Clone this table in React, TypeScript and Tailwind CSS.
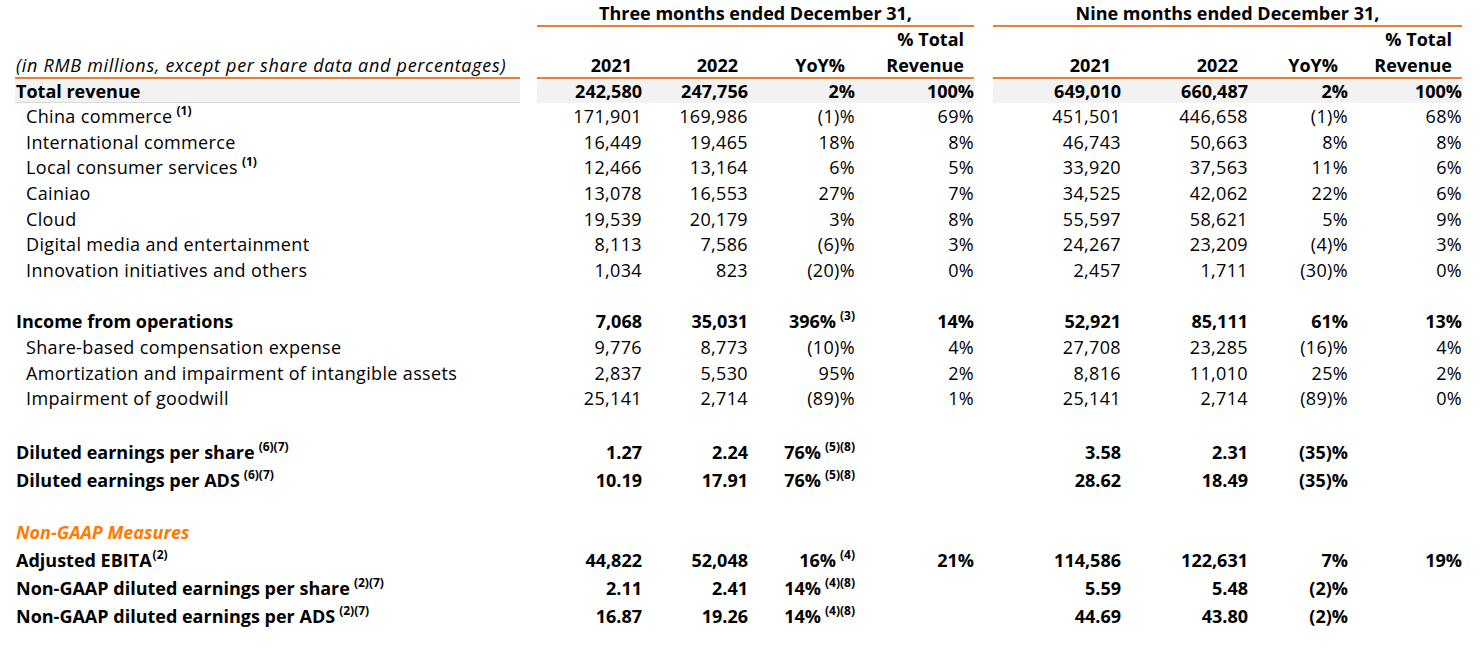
import React from 'react'

type Row = {
  label: string
  note?: string
  bold?: boolean
  indent?: boolean
  grey?: boolean
  h: string
  q?: [string, string, string, string]
  qNote?: string
  n?: [string, string, string, string]
  nNote?: string
  orange?: boolean
}

const grid =
  'grid grid-cols-[505px_17px_105px_106px_107px_119px_19px_128px_127px_100px_114px]'

const rows: Row[] = [
  { label: 'Total revenue', bold: true, grey: true, h: 'h-[24px]', q: ['242,580', '247,756', '2%', '100%'], n: ['649,010', '660,487', '2%', '100%'] },
  { label: 'China commerce', note: '(1)', indent: true, h: 'h-[25.7px]', q: ['171,901', '169,986', '(1)%', '69%'], n: ['451,501', '446,658', '(1)%', '68%'] },
  { label: 'International commerce', indent: true, h: 'h-[25.7px]', q: ['16,449', '19,465', '18%', '8%'], n: ['46,743', '50,663', '8%', '8%'] },
  { label: 'Local consumer services', note: '(1)', indent: true, h: 'h-[25.7px]', q: ['12,466', '13,164', '6%', '5%'], n: ['33,920', '37,563', '11%', '6%'] },
  { label: 'Cainiao', indent: true, h: 'h-[25.7px]', q: ['13,078', '16,553', '27%', '7%'], n: ['34,525', '42,062', '22%', '6%'] },
  { label: 'Cloud', indent: true, h: 'h-[25.7px]', q: ['19,539', '20,179', '3%', '8%'], n: ['55,597', '58,621', '5%', '9%'] },
  { label: 'Digital media and entertainment', indent: true, h: 'h-[25.7px]', q: ['8,113', '7,586', '(6)%', '3%'], n: ['24,267', '23,209', '(4)%', '3%'] },
  { label: 'Innovation initiatives and others', indent: true, h: 'h-[25.7px]', q: ['1,034', '823', '(20)%', '0%'], n: ['2,457', '1,711', '(30)%', '0%'] },
  { label: '', h: 'h-[25.7px]' },
  { label: 'Income from operations', bold: true, h: 'h-[25.7px]', q: ['7,068', '35,031', '396%', '14%'], qNote: '(3)', n: ['52,921', '85,111', '61%', '13%'] },
  { label: 'Share-based compensation expense', indent: true, h: 'h-[25.7px]', q: ['9,776', '8,773', '(10)%', '4%'], n: ['27,708', '23,285', '(16)%', '4%'] },
  { label: 'Amortization and impairment of intangible assets', indent: true, h: 'h-[25.7px]', q: ['2,837', '5,530', '95%', '2%'], n: ['8,816', '11,010', '25%', '2%'] },
  { label: 'Impairment of goodwill', indent: true, h: 'h-[25.7px]', q: ['25,141', '2,714', '(89)%', '1%'], n: ['25,141', '2,714', '(89)%', '0%'] },
  { label: '', h: 'h-[26.6px]' },
  { label: 'Diluted earnings per share', note: '(6)(7)', bold: true, h: 'h-[28px]', q: ['1.27', '2.24', '76%', ''], qNote: '(5)(8)', n: ['3.58', '2.31', '(35)%', ''] },
  { label: 'Diluted earnings per ADS', note: '(6)(7)', bold: true, h: 'h-[28px]', q: ['10.19', '17.91', '76%', ''], qNote: '(5)(8)', n: ['28.62', '18.49', '(35)%', ''] },
  { label: '', h: 'h-[24px]' },
  { label: 'Non-GAAP Measures', orange: true, h: 'h-[28px]' },
  { label: 'Adjusted EBITA', note: '(2)', bold: true, h: 'h-[28px]', q: ['44,822', '52,048', '16%', '21%'], qNote: '(4)', n: ['114,586', '122,631', '7%', '19%'] },
  { label: 'Non-GAAP diluted earnings per share', note: '(2)(7)', bold: true, h: 'h-[28px]', q: ['2.11', '2.41', '14%', ''], qNote: '(4)(8)', n: ['5.59', '5.48', '(2)%', ''] },
  { label: 'Non-GAAP diluted earnings per ADS', note: '(2)(7)', bold: true, h: 'h-[28px]', q: ['16.87', '19.26', '14%', ''], qNote: '(4)(8)', n: ['44.69', '43.80', '(2)%', ''] },
]

function Note({ children, tight }: { children: string; tight?: boolean }) {
  return (
    <span
      className={`relative -top-[5px] text-[12px] font-bold tracking-normal ${
        tight ? 'ml-px' : 'ml-[4px]'
      }`}
    >
      {children}
    </span>
  )
}

function Cell({ v, note, grey }: { v?: string; note?: string; grey?: boolean }) {
  return (
    <div className={`flex items-center justify-end ${grey ? 'bg-[#f2f2f2]' : ''}`}>
      {v}
      {v && note && <Note>{note}</Note>}
    </div>
  )
}

function DataRow({ r }: { r: Row }) {
  const g = r.grey
  return (
    <div className={`${grid} ${r.h} ${r.bold ? 'font-bold' : 'tracking-[0.35px]'}`}>
      <div
        className={`flex items-center ${r.indent ? 'pl-[11px]' : 'pl-px'} ${
          g ? 'bg-[#f2f2f2] border-b border-[#d9d9d9]' : ''
        } ${r.orange ? 'italic font-bold tracking-normal text-[#ff7a00]' : ''}`}
      >
        {r.label}
        {r.note && <Note tight={r.label === 'Adjusted EBITA'}>{r.note}</Note>}
      </div>
      <div />
      <Cell v={r.q?.[0]} grey={g} />
      <Cell v={r.q?.[1]} grey={g} />
      <Cell v={r.q?.[2]} note={r.qNote} grey={g} />
      <Cell v={r.q?.[3]} grey={g} />
      <div />
      <Cell v={r.n?.[0]} grey={g} />
      <Cell v={r.n?.[1]} grey={g} />
      <Cell v={r.n?.[2]} note={r.nNote} grey={g} />
      <Cell v={r.n?.[3]} grey={g} />
    </div>
  )
}

export default function App() {
  const head = 'flex items-end justify-end pr-[10px] font-bold'
  const line = 'border-b-2 border-[#ed7d31]'
  return (
    <div
      className="min-h-screen bg-white pl-[15px] text-[18px] leading-none text-black"
      style={{ fontFamily: '"Open Sans", Lato, sans-serif' }}
    >
      {/* period headings */}
      <div className={`${grid} h-[27px]`}>
        <div />
        <div />
        <div className={`col-span-4 flex items-center justify-center font-bold ${line}`}>
          Three months ended December 31,
        </div>
        <div />
        <div className={`col-span-4 flex items-center justify-center font-bold ${line}`}>
          Nine months ended December 31,
        </div>
      </div>

      <div className={`${grid} h-[25px]`}>
        <div />
        <div />
        <div />
        <div />
        <div />
        <div className={`${head} pb-[4px]`}>% Total</div>
        <div />
        <div />
        <div />
        <div />
        <div className={`${head} pb-[4px]`}>% Total</div>
      </div>

      <div className={`${grid} h-[27px]`}>
        <div className={`flex items-end pb-[3px] pl-px italic tracking-[0.7px] ${line}`}>
          (in RMB millions, except per share data and percentages)
        </div>
        <div />
        <div className={`${head} pb-[3px] ${line}`}>2021</div>
        <div className={`${head} pb-[3px] ${line}`}>2022</div>
        <div className={`${head} pb-[3px] ${line}`}>YoY%</div>
        <div className={`${head} pb-[3px] ${line}`}>Revenue</div>
        <div />
        <div className={`${head} pb-[3px] ${line}`}>2021</div>
        <div className={`${head} pb-[3px] ${line}`}>2022</div>
        <div className={`${head} pb-[3px] ${line}`}>YoY%</div>
        <div className={`${head} pb-[3px] ${line}`}>Revenue</div>
      </div>

      {rows.map((r, i) => (
        <DataRow key={i} r={r} />
      ))}
    </div>
  )
}
